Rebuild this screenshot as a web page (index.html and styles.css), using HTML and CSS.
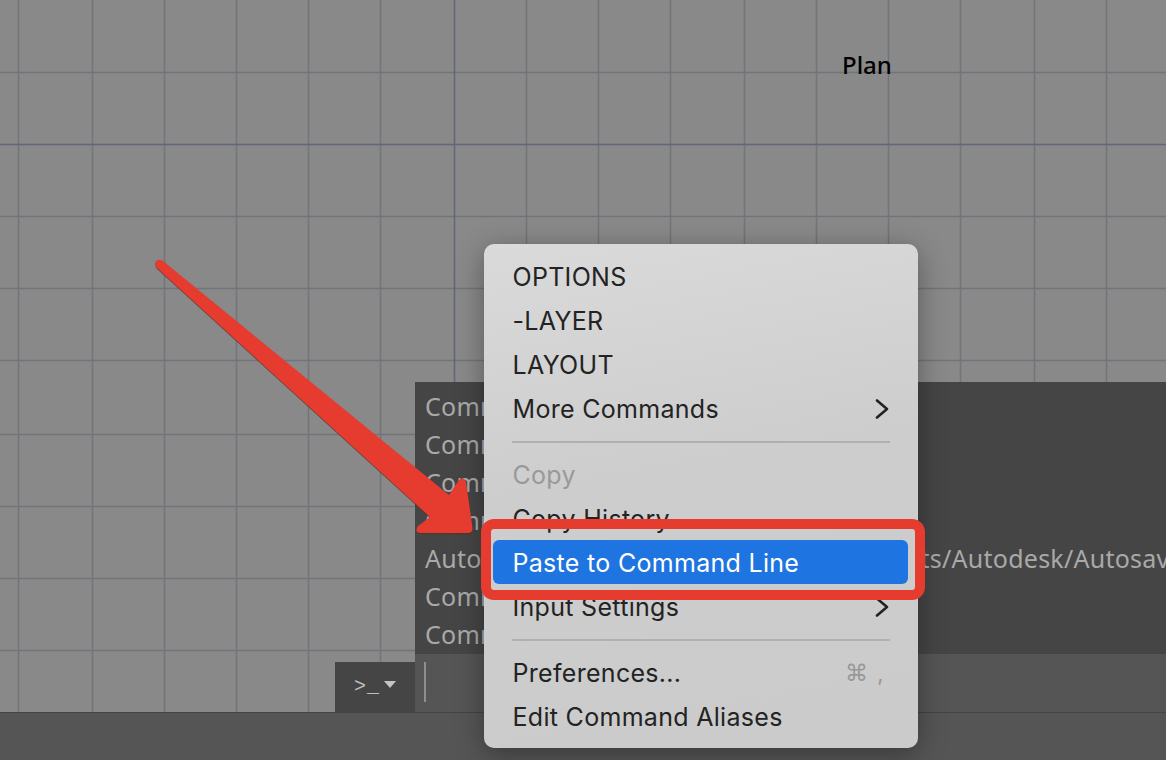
FILE: index.html
```html
<!DOCTYPE html>
<html lang="en">
<head>
<meta charset="utf-8">
<title>Command line context menu</title>
<link rel="stylesheet" href="styles.css">
</head>
<body>
<div class="app">
  <main class="canvas">
    <svg class="grid" width="1166" height="712" viewBox="0 0 1166 712" aria-hidden="true">
      <g class="grid-minor">
        <path d="M18.5 0V712M92.5 0V712M164.5 0V712M236.5 0V712M308.5 0V712M380.5 0V712M526.5 0V712M598.5 0V712M670.5 0V712M744.5 0V712M816.5 0V712M888.5 0V712M960.5 0V712M1034.5 0V712M1106.5 0V712"/>
        <path d="M0 72.5H1166M0 216.5H1166M0 288.5H1166M0 360.5H1166M0 434.5H1166M0 506.5H1166M0 578.5H1166M0 650.5H1166"/>
      </g>
      <g class="grid-major">
        <path d="M454.5 0V712M0 144.5H1166"/>
      </g>
    </svg>
    <span class="plan">Plan</span>

    <section class="cmd">
      <div class="history">
        <div class="line">Command:</div>
        <div class="line">Command:</div>
        <div class="line">Command:</div>
        <div class="line">Command:</div>
        <div class="line">Autosave to: /Users/designer-1/Documents/Autodesk/Autosave/Drawing1.dwg</div>
        <div class="line">Command:</div>
        <div class="line">Command:</div>
      </div>
      <div class="prompt">
        <span class="prompt-sign">&gt;_</span>
        <span class="prompt-caret"></span>
      </div>
      <div class="input"><span class="cursor"></span></div>
    </section>

    <nav class="menu">
      <div class="item">OPTIONS</div>
      <div class="item">-LAYER</div>
      <div class="item">LAYOUT</div>
      <div class="item">More Commands
        <svg class="chev" width="14" height="20" viewBox="0 0 14 20"><path d="M2 1.500l10 8.500-10 8.500"/></svg>
      </div>
      <div class="sep"></div>
      <div class="item disabled">Copy</div>
      <div class="item">Copy History</div>
      <div class="item active">Paste to Command Line</div>
      <div class="item">Input Settings
        <svg class="chev" width="14" height="20" viewBox="0 0 14 20"><path d="M2 1.500l10 8.500-10 8.500"/></svg>
      </div>
      <div class="sep"></div>
      <div class="item">Preferences...<span class="keys"><span class="cmdkey">⌘</span><span class="comma">,</span></span></div>
      <div class="item">Edit Command Aliases</div>
    </nav>

    <div class="frame"></div>
    <svg class="arrow" width="1166" height="712" viewBox="0 0 1166 712" aria-hidden="true">
      <path class="arrow-shadow" d="M157 269 L430 518 L419 527 Q415 533 421 534 L468 534.500 Q473 534 472.500 529 L466 483 Q464 477 459 481 L449 496 L163 262 Q158 259 155.500 263 Q155 267 157 269Z"/>
      <path class="arrow-fill" d="M157 268 L430 517 L418 526 Q414 532 420 533 L468 533 Q473 533 472.500 528 L466 482 Q464 476 459 480 L449 495 L163 261 Q158 258 155.500 262 Q155 266 157 268Z"/>
    </svg>
  </main>
  <footer class="status"></footer>
</div>
</body>
</html>
```
FILE: styles.css
```css
* { box-sizing: border-box; }
html, body { margin: 0; padding: 0; }
body { width: 1166px; height: 760px; overflow: hidden; background: #888; }

.app { display: flex; flex-direction: column; height: 760px; }

.canvas {
  position: relative;
  flex: 1;
  background: #898989;
  display: flex;
  justify-content: flex-end;
  align-items: flex-end;
}
.grid, .arrow { position: absolute; left: 0; top: 0; }
.grid path { fill: none; stroke-width: 1.5; }
.grid-minor path { stroke: #72747c; }
.grid-major path { stroke: #62667a; }

.plan {
  position: absolute;
  left: 842px;
  top: 49px;
  font: 500 24px/32px "Noto Sans", sans-serif;
  color: #000;
}

.cmd {
  position: relative;
  width: 831px;
  display: grid;
  grid-template-columns: 80px 1fr;
  grid-template-rows: auto 58px;
}
.history {
  grid-column: 2;
  grid-row: 1;
  background: #454545;
  padding: 5px 0 1px 10px;
  white-space: nowrap;
  overflow: hidden;
}
.line {
  height: 38px;
  font: 25px/38px "Noto Sans", sans-serif;
  letter-spacing: .25px;
  color: #a9a9a9;
}
.prompt {
  grid-column: 1;
  grid-row: 2;
  align-self: end;
  height: 50px;
  background: #454545;
  display: flex;
  align-items: center;
  justify-content: center;
  gap: 4px;
  color: #bdbdbd;
}
.prompt-sign { font: 20px/24px "Liberation Mono", monospace; letter-spacing: 1px; }
.prompt-caret {
  width: 0;
  height: 0;
  margin-bottom: 6px;
  border-left: 6px solid transparent;
  border-right: 6px solid transparent;
  border-top: 7px solid #c4c4c4;
}
.input {
  grid-column: 2;
  grid-row: 2;
  background: #555;
  padding: 8px 0 0 9px;
}
.cursor { display: block; width: 2px; height: 40px; background: #8f8f8f; }

.status { height: 48px; background: #555; border-top: 1px solid #444; }

.menu {
  position: absolute;
  left: 484px;
  top: 244px;
  width: 434px;
  height: 504px;
  padding: 11px 0 9px;
  border-radius: 10px;
  background: linear-gradient(170deg, #dadada 0%, #cdcdcd 45%, #cbcbcb 100%);
  box-shadow: 0 6px 28px rgba(0, 0, 0, .35);
  font: 25px/44px Inter, "Noto Sans", sans-serif;
  letter-spacing: .3px;
  color: #232323;
}
.item {
  position: relative;
  height: 44px;
  margin: 0 10px 0 9px;
  padding: 0 19px 0 19.500px;
  border-radius: 6px;
  white-space: nowrap;
  display: flex;
  justify-content: space-between;
  align-items: center;
}
.item.disabled { color: #999; }
.item.active { margin-top: -1px; margin-bottom: 1px; padding-top: 2px; background: #1e74e0; color: #fff; }
.sep { height: 2px; margin: 10px 28px; background: #b0b0b0; }
.chev { fill: none; stroke: #222; stroke-width: 2.6; stroke-linecap: round; stroke-linejoin: round; }
.keys { display: flex; gap: 9px; margin-right: 5px; color: #989898; }
.cmdkey { font: 23px/44px "DejaVu Sans", sans-serif; }
.comma { font: 22px/44px Inter, sans-serif; }

.frame {
  position: absolute;
  left: 481px;
  top: 519px;
  width: 444px;
  height: 81px;
  border: 10px solid #e63b2f;
  border-radius: 13px;
}
.arrow-fill { fill: #e63b2f; }
.arrow-shadow { fill: #5c302c; opacity: .8; }
```
